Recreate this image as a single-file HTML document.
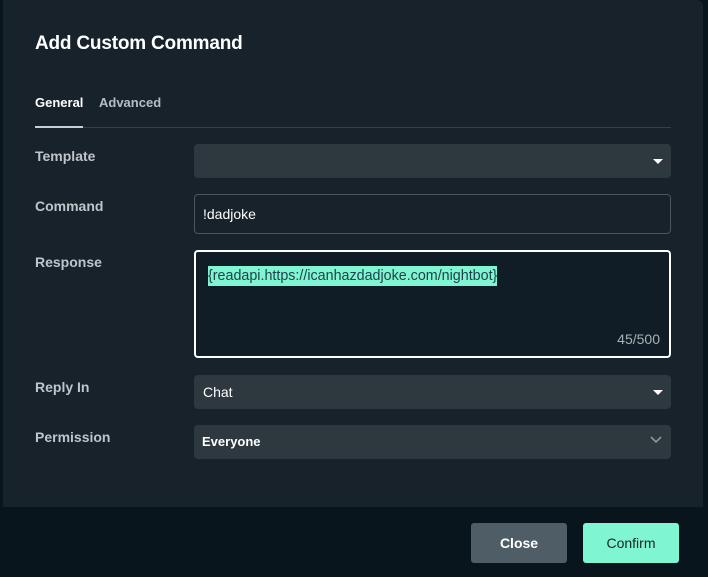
<!DOCTYPE html>
<html><head><style>
*{box-sizing:border-box;margin:0;padding:0}
body{width:708px;height:577px;background:#09151d;font-family:"Liberation Sans",sans-serif;position:relative;overflow:hidden}
.panel{position:absolute;left:3px;top:0;width:700px;height:507px;background:#17222b;border-radius:0 6px 0 0}
.t{position:absolute;font-weight:bold}
.lbl{position:absolute;left:35px;color:#bfc5c9;font-size:14px;font-weight:bold}
.box{position:absolute;left:194px;width:477px;border-radius:4px;background:#2d383f}
.caret{position:absolute;right:8px;top:15px;width:0;height:0;border-left:5px solid transparent;border-right:5px solid transparent;border-top:5px solid #fff}
.btn{position:absolute;top:523px;height:40px;width:96px;border-radius:3px;font-size:14px;text-align:center;line-height:40px}
</style></head><body>
<div class="panel"></div>
<div class="t" style="left:35px;top:33px;font-size:19px;color:#fff;letter-spacing:-0.2px">Add Custom Command</div>
<div class="t" style="left:35px;top:95px;font-size:13px;color:#fff">General</div>
<div class="t" style="left:99px;top:95px;font-size:13px;color:#b7bec3">Advanced</div>
<div style="position:absolute;left:35px;top:127px;width:636px;height:1px;background:#344048"></div>
<div style="position:absolute;left:35px;top:126px;width:48px;height:2px;background:#c8ced2"></div>
<div class="lbl" style="top:148px">Template</div>
<div class="box" style="top:144px;height:34px"><div class="caret"></div></div>
<div class="lbl" style="top:198px">Command</div>
<div class="box" style="top:194px;height:40px;background:#17222b;border:1px solid #4b565d;color:#fff;font-size:14px;padding:11px 0 0 8px">!dadjoke</div>
<div class="lbl" style="top:254px">Response</div>
<div class="box" style="top:250px;height:108px;background:#111d26;border:2px solid #fff">
<span style="position:absolute;left:12px;top:14px;background:#80f5d2;color:#21414a;font-size:14.3px;line-height:20px">{readapi.https://icanhazdadjoke.com/nightbot}</span>
<span style="position:absolute;right:9px;top:79px;color:#aab1b5;font-size:14px">45/500</span></div>
<div class="lbl" style="top:379px">Reply In</div>
<div class="box" style="top:375px;height:34px;color:#fff;font-size:14px;padding:9px 0 0 9px">Chat<div class="caret"></div></div>
<div class="lbl" style="top:429px">Permission</div>
<div class="box" style="top:425px;height:34px;color:#fff;font-size:13px;font-weight:bold;padding:9px 0 0 8px">Everyone
<svg style="position:absolute;right:9px;top:11px" width="12" height="8" viewBox="0 0 12 8"><path d="M1 1l5 5 5-5" stroke="#8d979d" stroke-width="1.6" fill="none"/></svg></div>
<div class="btn" style="left:471px;background:#4f5e66;color:#fff;font-weight:bold">Close</div>
<div class="btn" style="left:583px;background:#80f5d2;color:#17242d">Confirm</div>
</body></html>
